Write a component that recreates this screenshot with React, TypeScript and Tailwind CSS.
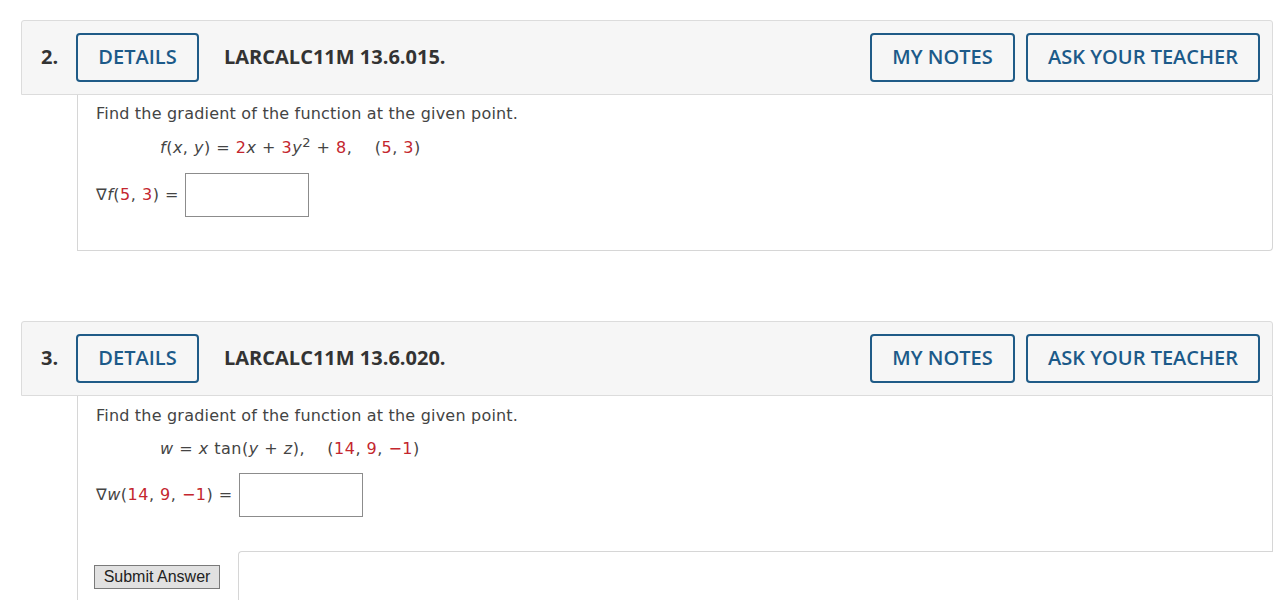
import React from "react";

const R = ({ children }: { children: React.ReactNode }) => <span className="text-[#c4262e]">{children}</span>;
const I = ({ children }: { children: React.ReactNode }) => <i>{children}</i>;

const HeaderBar = ({ num, code }: { num: string; code: string }) => {
  return (
    <div className="flex items-center h-[75px] bg-[#f6f6f6] border border-[#dcdcdc] rounded-t-[3px] pl-[19px] pr-[12px] pb-[1px] font-['Open_Sans',sans-serif]">
      <div className="w-[35px] text-[20px] font-bold text-[#333]">{num}</div>
      <button className="h-[49px] w-[123px] border-2 border-[#1f5b87] rounded-[4px] text-[20px] font-semibold text-[#1c5a89]">DETAILS</button>
      <div className="ml-[25px] text-[20px] font-bold text-[#333]">{code}</div>
      <div className="flex-1" />
      <button className="h-[49px] w-[145px] border-2 border-[#1f5b87] rounded-[4px] text-[20px] font-semibold text-[#1c5a89]">MY NOTES</button>
      <button className="ml-[11px] h-[49px] w-[234px] border-2 border-[#1f5b87] rounded-[4px] text-[20px] font-semibold text-[#1c5a89]">ASK YOUR TEACHER</button>
    </div>
  );
};

const AnswerBox = () => <div className="w-[124px] h-[44px] border border-[#8c8c8c] bg-white" />;

export default function App() {
  return (
    <div className="bg-white min-h-[600px] pt-[20px] pl-[21px] pr-[11px] font-['DejaVu_Sans',Verdana,sans-serif] text-[#444]">
      {/* question 2 */}
      <HeaderBar num="2." code="LARCALC11M 13.6.015." />
      <div className="ml-[56px] border-l border-r border-b border-[#d6d6d6] rounded-br-[4px] pl-[18px] pt-[7px] pb-[33px] text-[16px] tracking-[0.2px]">
        <div className="h-[24px] leading-[24px]">Find the gradient of the function at the given point.</div>
        <div className="mt-[10px] ml-[64px] h-[24px] leading-[24px] whitespace-pre tracking-[0.5px]">
          <I>f</I>(<I>x</I>, <I>y</I>) = <R>2</R><I>x</I> + <R>3</R><I>y</I><sup className="text-[13px]">2</sup> + <R>8</R>,    (<R>5</R>, <R>3</R>)
        </div>
        <div className="mt-[13px] flex items-center gap-[6px]">
          <span className="tracking-[0.5px]">∇<I>f</I>(<R>5</R>, <R>3</R>) =</span>
          <AnswerBox />
        </div>
      </div>

      <div className="h-[70px]" />

      {/* question 3 */}
      <HeaderBar num="3." code="LARCALC11M 13.6.020." />
      <div className="ml-[56px] border-l border-[#d6d6d6] text-[16px] tracking-[0.2px]">
        <div className="border-r border-[#d6d6d6] pl-[18px] pt-[8px] pb-[34px]">
          <div className="h-[24px] leading-[24px]">Find the gradient of the function at the given point.</div>
          <div className="mt-[9px] ml-[64px] h-[24px] leading-[24px] whitespace-pre tracking-[0.5px]">
            <I>w</I> = <I>x</I> tan(<I>y</I> + <I>z</I>),    (<R>14</R>, <R>9</R>, <R>−1</R>)
          </div>
          <div className="mt-[12px] flex items-center gap-[6px]">
            <span className="tracking-[0.5px]">∇<I>w</I>(<R>14</R>, <R>9</R>, <R>−1</R>) =</span>
            <AnswerBox />
          </div>
        </div>
        <div className="flex">
          <div className="w-[160px] pl-[16px] pt-[14px]">
            <button className="h-[24px] w-[126px] bg-[#e1e1e1] border border-[#7a7a7a] font-['Liberation_Sans',Arial,sans-serif] text-[16px] leading-[20px] tracking-normal text-[#222]">Submit Answer</button>
          </div>
          <div className="flex-1 h-[49px] border-t border-l border-[#d6d6d6] rounded-tl-[4px]" />
        </div>
      </div>
    </div>
  );
}
